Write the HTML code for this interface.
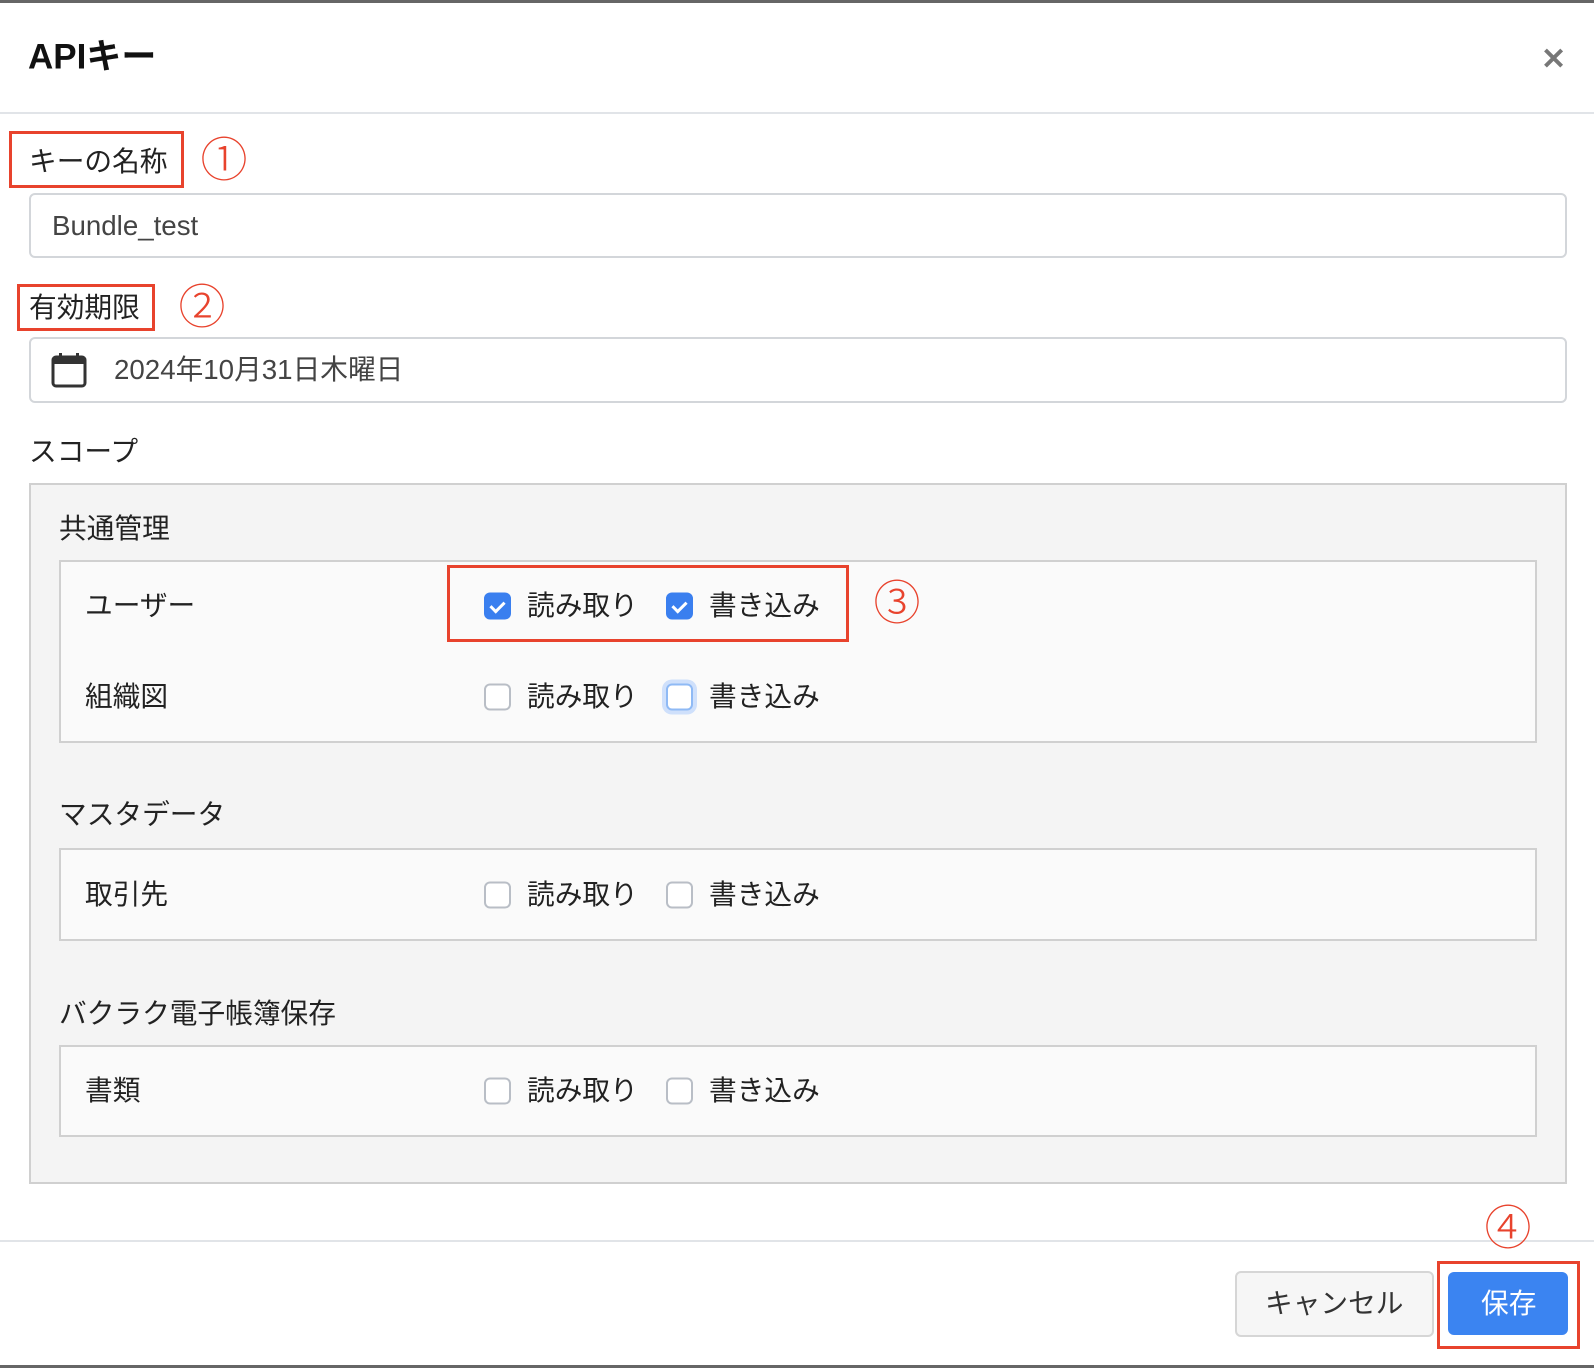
<!DOCTYPE html>
<html><head><meta charset="utf-8"><style>
*{box-sizing:border-box;margin:0;padding:0}
body{width:1594px;height:1368px;background:#fff;position:relative;overflow:hidden;font-family:"Liberation Sans","Noto Sans CJK JP",sans-serif;color:#222}
.a{position:absolute;white-space:nowrap}
.t{font-size:27.7px;line-height:1;transform:translateY(-50%)}
.red{position:absolute;border:3px solid #e8432d}
.num{position:absolute;color:#e8432d;font-size:47px;font-weight:300;line-height:1;transform:translate(-50%,-50%)}
.inp{position:absolute;border:2px solid #d3d6da;border-radius:6px;background:#fff}
.box{position:absolute;left:59px;width:1478px;background:#fafafa;border:2px solid #d0d0d0}
.cb{position:absolute;width:27px;height:27px;border:2px solid #b9bec6;border-radius:6px;background:#fff;transform:translateY(-50%)}
.cb.on{background:#3a7fef;border-color:#3a7fef}
.cb.on:after{content:"";position:absolute;left:7px;top:4px;width:6px;height:11px;border:solid #fff;border-width:0 3px 3px 0;transform:rotate(45deg)}
.cb.f{border-color:#8fbaf5;box-shadow:0 0 0 4px #cfe0fb}
</style></head><body>
<div class="a" style="left:0;top:0;width:1594px;height:3px;background:#666"></div>
<div class="a" style="left:0;top:1365px;width:1594px;height:3px;background:#666"></div>
<div class="a t" style="left:28px;top:57px;font-size:35px;font-weight:bold;color:#111">APIキー</div>
<div class="a" style="left:1541px;top:42px;font-size:30px;color:#777;font-weight:bold">✕</div>
<div class="a" style="left:0;top:112px;width:1594px;height:2px;background:#e1e4e8"></div>

<div class="red" style="left:9px;top:131px;width:175px;height:57px"></div>
<div class="a t" style="left:29px;top:162px">キーの名称</div>
<div class="num" style="left:224px;top:160px">①</div>
<div class="inp" style="left:29px;top:193px;width:1538px;height:65px"></div>
<div class="a t" style="left:52px;top:226px;color:#444">Bundle_test</div>

<div class="red" style="left:17px;top:284px;width:138px;height:47px"></div>
<div class="a t" style="left:29px;top:308px">有効期限</div>
<div class="num" style="left:202px;top:307px">②</div>
<div class="inp" style="left:29px;top:337px;width:1538px;height:66px"></div>
<svg class="a" style="left:51px;top:353px" width="36" height="35" viewBox="0 0 36 35"><rect x="2" y="4" width="32" height="29" rx="3" fill="none" stroke="#333" stroke-width="3"/><rect x="2" y="4" width="32" height="7" fill="#333"/><rect x="8" y="0" width="3" height="6" fill="#333"/><rect x="25" y="0" width="3" height="6" fill="#333"/></svg>
<div class="a t" style="left:114px;top:370px;color:#444">2024年10月31日木曜日</div>

<div class="a t" style="left:29px;top:452px">スコープ</div>
<div class="a" style="left:29px;top:483px;width:1538px;height:701px;background:#f4f4f4;border:2px solid #d0d0d0"></div>

<div class="a t" style="left:59px;top:529px">共通管理</div>
<div class="box" style="top:560px;height:183px"></div>
<div class="a t" style="left:85px;top:606px">ユーザー</div>
<div class="cb on" style="left:484px;top:606px"></div><div class="a t" style="left:527px;top:606px">読み取り</div>
<div class="cb on" style="left:666px;top:606px"></div><div class="a t" style="left:709px;top:606px">書き込み</div>
<div class="red" style="left:447px;top:565px;width:402px;height:77px"></div>
<div class="num" style="left:897px;top:603px">③</div>
<div class="a t" style="left:85px;top:697px">組織図</div>
<div class="cb" style="left:484px;top:697px"></div><div class="a t" style="left:527px;top:697px">読み取り</div>
<div class="cb f" style="left:666px;top:697px"></div><div class="a t" style="left:709px;top:697px">書き込み</div>

<div class="a t" style="left:59px;top:815px">マスタデータ</div>
<div class="box" style="top:848px;height:93px"></div>
<div class="a t" style="left:85px;top:895px">取引先</div>
<div class="cb" style="left:484px;top:895px"></div><div class="a t" style="left:527px;top:895px">読み取り</div>
<div class="cb" style="left:666px;top:895px"></div><div class="a t" style="left:709px;top:895px">書き込み</div>

<div class="a t" style="left:59px;top:1014px">バクラク電子帳簿保存</div>
<div class="box" style="top:1045px;height:92px"></div>
<div class="a t" style="left:85px;top:1091px">書類</div>
<div class="cb" style="left:484px;top:1091px"></div><div class="a t" style="left:527px;top:1091px">読み取り</div>
<div class="cb" style="left:666px;top:1091px"></div><div class="a t" style="left:709px;top:1091px">書き込み</div>

<div class="a" style="left:0;top:1240px;width:1594px;height:2px;background:#e1e4e8"></div>
<div class="a" style="left:1235px;top:1271px;width:199px;height:66px;border:2px solid #d6d6d6;border-radius:6px;background:#f6f6f6"></div>
<div class="a t" style="left:1265px;top:1304px;color:#333">キャンセル</div>
<div class="a" style="left:1448px;top:1272px;width:120px;height:63px;border-radius:6px;background:#3b84f1"></div>
<div class="a t" style="left:1481px;top:1304px;color:#fff">保存</div>
<div class="red" style="left:1437px;top:1261px;width:143px;height:88px"></div>
<div class="num" style="left:1508px;top:1228px">④</div>
</body></html>
